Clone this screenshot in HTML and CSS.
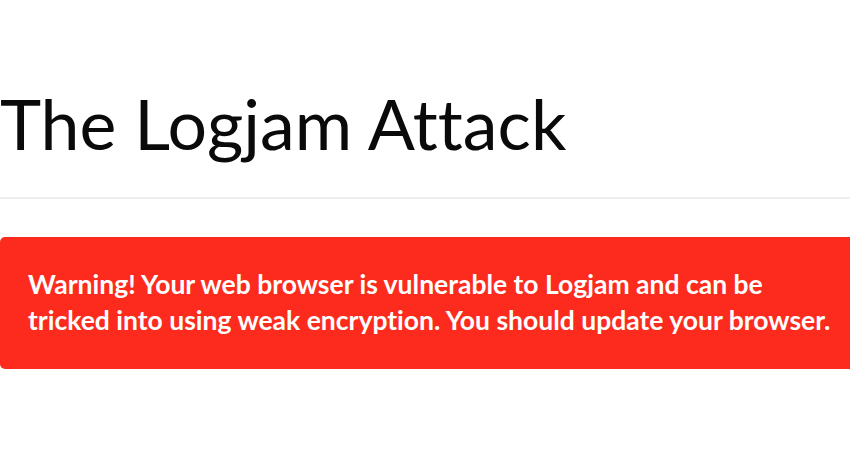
FILE: index.html
```html
<!DOCTYPE html>
<html lang="en">
<head>
    <meta charset="UTF-8">
    <meta name="viewport" content="width=device-width, initial-scale=1.0">
    <title>The Logjam Attack</title>
    <link rel="stylesheet" href="styles.css">
</head>
<body>
    <div class="container">
        <header class="page-header">
            <h1>The Logjam Attack</h1>
        </header>

        <div class="alert alert-danger">
            <strong>Warning! Your web browser is vulnerable to Logjam and can be tricked into using weak encryption. You should update your browser.</strong>
        </div>
    </div>
</body>
</html>
```

FILE: styles.css
```css
:root {
    --text: #0a0a0a;
    --border: #eeeeee;
    --danger: #fc2b1e;
}

* {
    box-sizing: border-box;
    margin: 0;
    padding: 0;
}

body {
    font-family: Lato, 'Open Sans', sans-serif;
    font-variant-ligatures: none;
    color: var(--text);
    background-color: #ffffff;
    overflow: hidden;
}

.container {
    width: 880px;
    padding-top: 82px;
}

.page-header {
    padding-bottom: 31px;
    border-bottom: 2px solid var(--border);
    margin-bottom: 38px;
}

h1 {
    font-size: 69.8px;
    font-weight: 400;
    line-height: 1.2;
}

.alert {
    padding: 29px 37px 31px 28px;
    border-radius: 5px;
    font-size: 26.5px;
    line-height: 36px;
}

.alert-danger {
    background-color: var(--danger);
    color: #ffffff;
}

.alert strong {
    font-weight: 700;
}
```
